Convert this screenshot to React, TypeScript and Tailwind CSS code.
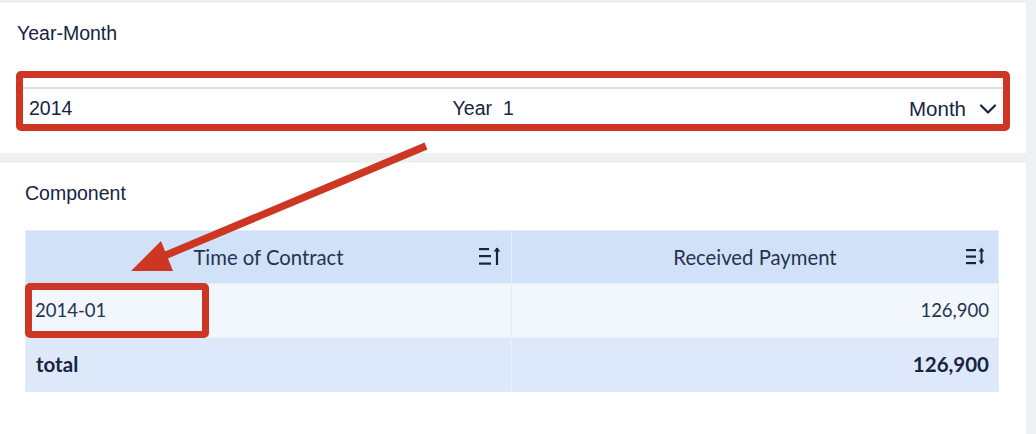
import React from "react";

const SortUpIcon = () => (
  <svg width="24" height="24" viewBox="0 0 24 24" className="block">
    <rect x="2" y="4" width="10" height="2.2" fill="#17233f" />
    <rect x="2" y="11" width="12" height="2.2" fill="#17233f" />
    <rect x="2" y="18.5" width="12" height="2.2" fill="#17233f" />
    <path d="M20 21V4" stroke="#17233f" strokeWidth="2.2" />
    <path d="M16.6 7.6L20 3.4l3.4 4.2z" fill="#17233f" />
  </svg>
);

const SortBothIcon = () => (
  <svg width="24" height="24" viewBox="0 0 24 24" className="block">
    <rect x="2" y="5" width="10" height="2.2" fill="#17233f" />
    <rect x="2" y="11.5" width="10" height="2.2" fill="#17233f" />
    <rect x="2" y="18" width="10" height="2.2" fill="#17233f" />
    <path d="M17.5 6.5v11" stroke="#17233f" strokeWidth="2" />
    <path d="M14.6 7.4L17.5 3.4l2.9 4z" fill="#17233f" />
    <path d="M14.6 16.6L17.5 20.6l2.9-4z" fill="#17233f" />
  </svg>
);

const Chevron = () => (
  <svg width="18" height="12" viewBox="0 0 18 12" className="block">
    <path d="M2 2.5l7 7 7-7" fill="none" stroke="#17233f" strokeWidth="2.2" strokeLinecap="round" strokeLinejoin="round" />
  </svg>
);

export default function App() {
  return (
    <div
      className="relative w-[1036px] h-[434px] overflow-hidden bg-[#eff0f4] pt-[3px] text-[#17233f]"
      style={{ fontFamily: '"Liberation Sans", Arial, sans-serif' }}
    >
      {/* Year-Month panel */}
      <div className="relative w-[1026px] h-[150px] bg-white">
        <div className="pl-[17px] pt-[18px] text-[19.5px] leading-6">Year-Month</div>
        <div className="mt-[42px] mx-[16px] border-t-2 border-[#d9dde3] h-[42px] grid grid-cols-[481px_1fr] items-center text-[19.5px]">
          <div className="flex items-center justify-between pl-[13px] pr-[5px]">
            <span>2014</span>
            <span>Year</span>
          </div>
          <div className="flex items-center justify-between pl-[6px] pr-[13px]">
            <span>1</span>
            <span className="flex items-center gap-[13px]">
              <span className="text-[20.5px]">Month</span>
              <Chevron />
            </span>
          </div>
        </div>
        <div className="absolute left-[16px] top-[68px] w-[994px] h-[60px] border-[7.5px] border-[#cc3623] rounded-[5px]" />
      </div>

      {/* Component panel */}
      <div className="relative mt-[10px] w-[1026px] h-[271px] bg-white">
        <div className="pl-[25px] pt-[18px] text-[19.5px] leading-6">Component</div>
        <div
          className="mt-[25px] ml-[25px] w-[974px] border border-[#e3ecf8] text-[18.5px]"
          style={{ fontFamily: 'Lato, "Noto Sans", sans-serif' }}
        >
          <div className="grid grid-cols-2 h-[52px] bg-[#d1e2f8] text-[20.3px] text-[#26324f]">
            <div className="relative flex items-center justify-center border-r border-[#e6eefa]">
              <span>Time of Contract</span>
              <span className="absolute right-[10px] top-[13px]">
                <SortUpIcon />
              </span>
            </div>
            <div className="relative flex items-center justify-center">
              <span>Received Payment</span>
              <span className="absolute right-[10px] top-[13px]">
                <SortBothIcon />
              </span>
            </div>
          </div>
          <div className="grid grid-cols-2 h-[54px] bg-[#f2f7fe] border-t border-[#e3ecf8] text-[#26324f]">
            <div className="flex items-center pl-[9px] border-r border-[#e3ecf8]">2014-01</div>
            <div className="flex items-center justify-end pr-[9px]">126,900</div>
          </div>
          <div className="grid grid-cols-2 h-[54px] bg-[#dde9fb] border-t border-[#e8f0fb] font-bold text-[20.5px]">
            <div className="flex items-center pl-[10px] border-r border-[#e8f0fb]">total</div>
            <div className="flex items-center justify-end pr-[9px]">126,900</div>
          </div>
        </div>
        <div className="absolute left-[25px] top-[120px] w-[184px] h-[55px] border-[7.5px] border-[#cc3623] rounded-[5px]" />
      </div>

      {/* annotation arrow */}
      <svg className="absolute left-0 top-0 pointer-events-none" width="1036" height="434" viewBox="0 0 1036 434">
        <path d="M426 146L164 256" stroke="#cc3623" strokeWidth="7.5" />
        <path d="M131 271L161 241L173 271Z" fill="#cc3623" />
      </svg>
    </div>
  );
}
